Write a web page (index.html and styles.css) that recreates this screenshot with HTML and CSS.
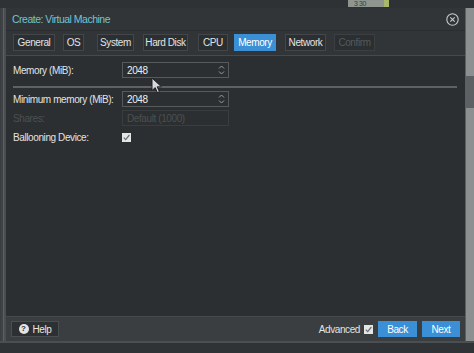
FILE: index.html
```html
<!DOCTYPE html>
<html lang="en">

<head>
    <meta charset="UTF-8">
    <meta name="viewport" content="width=device-width, initial-scale=1.0">
    <title>Create: Virtual Machine</title>
    <link rel="stylesheet" href="styles.css">
</head>

<body>
    <div class="screen">
        <div class="top-strip">
            <div class="cell">3 30</div>
            <div class="cell-mark"></div>
        </div>

        <div class="middle">
            <div class="left-strip"></div>

            <div class="dialog">
                <div class="titlebar">
                    <span class="title">Create: Virtual Machine</span>
                    <svg class="close" width="13" height="13" viewBox="0 0 13 13">
                        <circle cx="6.5" cy="6.5" r="5.7" fill="none" stroke="#c9cbcc" stroke-width="1.1"/>
                        <path d="M4.3 4.3 L8.7 8.7 M8.7 4.3 L4.3 8.7" stroke="#c9cbcc" stroke-width="1.1"/>
                    </svg>
                </div>

                <div class="tabs">
                    <button class="tab tab-general">General</button>
                    <button class="tab tab-os">OS</button>
                    <button class="tab tab-system">System</button>
                    <button class="tab tab-disk">Hard Disk</button>
                    <button class="tab tab-cpu">CPU</button>
                    <button class="tab tab-memory active">Memory</button>
                    <button class="tab tab-network">Network</button>
                    <button class="tab tab-confirm disabled">Confirm</button>
                </div>

                <div class="panel">
                    <div class="row">
                        <label class="label">Memory (MiB):</label>
                        <div class="field">
                            <span>2048</span>
                            <svg class="spin" width="7" height="12" viewBox="0 0 7 12">
                                <path d="M1 4.5 L3.5 2 L6 4.5 M1 7.5 L3.5 10 L6 7.5" fill="none" stroke="#9a9ea0" stroke-width="1"/>
                            </svg>
                        </div>
                    </div>

                    <div class="splitter"></div>

                    <div class="row">
                        <label class="label">Minimum memory (MiB):</label>
                        <div class="field">
                            <span>2048</span>
                            <svg class="spin" width="7" height="12" viewBox="0 0 7 12">
                                <path d="M1 4.5 L3.5 2 L6 4.5 M1 7.5 L3.5 10 L6 7.5" fill="none" stroke="#9a9ea0" stroke-width="1"/>
                            </svg>
                        </div>
                    </div>

                    <div class="row row-disabled">
                        <label class="label">Shares:</label>
                        <div class="field">
                            <span>Default (1000)</span>
                        </div>
                    </div>

                    <div class="row">
                        <label class="label">Ballooning Device:</label>
                        <svg class="check" width="9" height="9" viewBox="0 0 9 9">
                            <rect width="9" height="9" fill="#e4e5e5"/>
                            <path d="M1.8 4.6 L3.7 6.6 L7.4 2" fill="none" stroke="#6a6e70" stroke-width="1.2"/>
                        </svg>
                    </div>
                </div>

                <div class="footer">
                    <button class="btn btn-help">
                        <span class="help-icon">?</span>
                        Help
                    </button>
                    <div class="footer-right">
                        <span class="advanced">Advanced</span>
                        <svg class="check" width="9" height="9" viewBox="0 0 9 9">
                            <rect width="9" height="9" fill="#e4e5e5"/>
                            <path d="M1.8 4.6 L3.7 6.6 L7.4 2" fill="none" stroke="#6a6e70" stroke-width="1.2"/>
                        </svg>
                        <button class="btn btn-blue btn-back">Back</button>
                        <button class="btn btn-blue btn-next">Next</button>
                    </div>
                </div>
            </div>

            <div class="right-strip">
                <div class="strip-block"></div>
            </div>
        </div>

        <div class="bottom-strip"></div>
    </div>

    <svg class="cursor" width="12" height="17" viewBox="0 0 12 17">
        <path d="M1 1 L1 13.5 L4.2 10.6 L6.4 15.6 L8.4 14.7 L6.2 9.8 L10.4 9.8 Z" fill="#d8d9da" stroke="#1e2022" stroke-width="1"/>
    </svg>
</body>

</html>
```

FILE: styles.css
```css
body {
    margin: 0;
    width: 474px;
    height: 353px;
    overflow: hidden;
    background-color: #2d3133;
    font-family: 'Liberation Sans', Arial, sans-serif;
    font-size: 10px;
    letter-spacing: -0.4px;
    color: #e2e3e3;
    position: relative;
}

.screen {
    display: flex;
    flex-direction: column;
    height: 353px;
}

.top-strip {
    height: 8px;
    background-color: #2e3234;
    display: flex;
    align-items: flex-start;
    padding-left: 348px;
}

.cell {
    width: 36px;
    height: 7px;
    background-color: #8f9690;
    color: #3a3e3a;
    font-size: 7px;
    line-height: 7px;
    padding-left: 6px;
    box-sizing: border-box;
}

.cell-mark {
    width: 5px;
    height: 7px;
    background-color: #a9b86a;
}

.middle {
    display: flex;
    height: 333px;
}

.left-strip {
    width: 5px;
    border-left: 1px solid #3a3e40;
    background: linear-gradient(to right, #3f4345 0, #3f4345 2px, #5c6062 2px, #5c6062 3px, #4a4e50 3px);
}

.right-strip {
    flex: 1;
    background-color: #8c9090;
    border-left: 1px solid #5c6062;
    padding-top: 68px;
}

.strip-block {
    height: 32px;
    background-color: #5d6163;
}

.dialog {
    width: 459px;
    display: flex;
    flex-direction: column;
    background-color: #2b2f31;
}

.titlebar {
    height: 22px;
    display: flex;
    align-items: center;
    justify-content: space-between;
    padding: 0 6px;
    background-color: #313537;
    border-bottom: 1px solid #2a2d2f;
}

.title {
    color: #72c4cf;
    font-size: 10.5px;
    letter-spacing: -0.5px;
}

.tabs {
    height: 21px;
    display: flex;
    align-items: flex-start;
    padding: 3px 0 0 7px;
    background-color: #313537;
    border-bottom: 1px solid #464a4c;
}

.tab {
    height: 17px;
    padding: 0;
    border: 1px solid #43474a;
    background-color: #2b2f31;
    color: #e2e3e3;
    font-family: inherit;
    font-size: 10px;
    letter-spacing: -0.4px;
}

.tab-general { width: 42px; margin-right: 8px; }
.tab-os { width: 21px; margin-right: 13px; }
.tab-system { width: 37px; margin-right: 9px; }
.tab-disk { width: 45px; margin-right: 10px; }
.tab-cpu { width: 30px; margin-right: 6px; }
.tab-memory { width: 42px; margin-right: 9px; }
.tab-network { width: 41px; margin-right: 8px; }
.tab-confirm { width: 41px; }

.tab.active {
    background-color: #3b8fd5;
    border-color: #3b8fd5;
    color: #ffffff;
}

.tab.disabled {
    color: #55595b;
    border-color: #3b3f41;
}

.panel {
    flex: 1;
    padding: 6px 0 0 7px;
    display: flex;
    flex-direction: column;
    gap: 3px;
}

.row {
    height: 16px;
    display: flex;
    align-items: center;
}

.label {
    width: 109px;
}

.field {
    box-sizing: border-box;
    width: 107px;
    height: 16px;
    border: 1px solid #555a5c;
    display: flex;
    align-items: center;
    justify-content: space-between;
    padding: 0 3px 0 4px;
    color: #eeeeee;
}

.spin {
    display: block;
}

.row-disabled .label,
.row-disabled .field {
    color: #4b4f51;
}

.row-disabled .field {
    border-color: #393d3f;
}

.splitter {
    height: 2px;
    margin: 5px 0 0 0;
    width: 444px;
    background-color: #5e6264;
}

.check {
    display: block;
}

.footer {
    height: 24px;
    display: flex;
    align-items: center;
    justify-content: space-between;
    padding: 0 5px;
    background-color: #3a3e40;
    border-top: 1px solid #45494b;
}

.btn {
    height: 16px;
    padding: 0;
    border: 1px solid #4a4e50;
    font-family: inherit;
    font-size: 10px;
    letter-spacing: -0.4px;
    color: #e8e8e8;
    display: flex;
    align-items: center;
    justify-content: center;
}

.btn-help {
    width: 48px;
    background-color: #2c3032;
    gap: 4px;
}

.help-icon {
    width: 10px;
    height: 10px;
    border-radius: 50%;
    background-color: #e4e4e4;
    color: #2c3032;
    font-weight: bold;
    font-size: 8px;
    line-height: 10px;
    letter-spacing: 0;
    text-align: center;
}

.footer-right {
    display: flex;
    align-items: center;
}

.advanced {
    margin-right: 4px;
}

.btn-blue {
    background-color: #3a8fd6;
    border-color: #3a8fd6;
    color: #ffffff;
}

.btn-back {
    width: 39px;
    margin-left: 5px;
}

.btn-next {
    width: 38px;
    margin-left: 5px;
}

.bottom-strip {
    flex: 1;
    background-color: #2f3335;
    border-top: 2px solid #4b4f51;
}

.cursor {
    position: absolute;
    left: 151px;
    top: 77px;
}
```
